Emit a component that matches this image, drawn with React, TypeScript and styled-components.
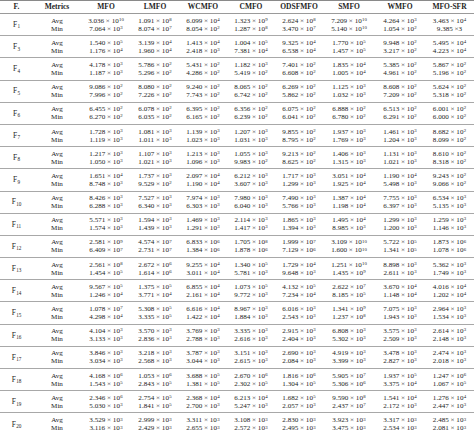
import React from "react";
import styled, { createGlobalStyle } from "styled-components";

const GlobalStyle = createGlobalStyle`
  html, body {
    margin: 0;
    padding: 0;
    background: #ffffff;
  }
  body {
    font-family: "Liberation Serif", "Times New Roman", serif;
    color: #1e1e1e;
  }
`;

const COLS = "33px 48px 50px 48px 48px 48px 48px 52px 50px 49px";

const Page = styled.div`
  width: 474px;
  height: 436px;
  overflow: hidden;
  background: #fff;
`;

const HeaderRow = styled.div`
  display: grid;
  grid-template-columns: ${COLS};
  height: 14px;
  box-sizing: border-box;
  border-top: 1.5px solid #8a8a8a;
  border-bottom: 1px solid #9a9a9a;
  align-items: center;
`;

const HeadCell = styled.div`
  text-align: center;
  font-size: 7.5px;
  font-weight: bold;
  line-height: 1;
  white-space: nowrap;
`;

const Group = styled.div<{ $last?: boolean }>`
  display: grid;
  grid-template-columns: ${COLS};
  height: 22.2px;
  box-sizing: border-box;
  border-bottom: ${(p) => (p.$last ? "none" : "1px solid #a8a8a8")};
  align-items: center;
`;

const FuncCell = styled.div`
  text-align: center;
  font-size: 7.4px;
  line-height: 1;
`;

const Stack = styled.div`
  display: flex;
  flex-direction: column;
  align-items: center;
  font-size: 7.1px;
  line-height: 8px;
  white-space: nowrap;
`;

const Sup = styled.span`
  position: relative;
  top: -0.4em;
  font-size: 0.68em;
  line-height: 0;
  margin-left: 0.3px;
`;

const Sub = styled.span`
  position: relative;
  top: 0.28em;
  font-size: 0.7em;
  line-height: 0;
  margin-left: 0.3px;
`;

const methods = ["MFO", "LMFO", "WCMFO", "CMFO", "ODSFMFO", "SMFO", "WMFO", "MFO-SFR"];

type Block = { f: number; avg: string[]; min: string[] };

const data: Block[] = [
  { f: 1, avg: ["3.036e10", "1.091e8", "6.099e4", "1.323e9", "2.624e8", "7.209e10", "4.264e3", "3.463e4"], min: ["7.064e3", "8.074e7", "8.054e2", "1.287e8", "3.470e7", "5.140e10", "1.054e2", "9.385 ×3"] },
  { f: 3, avg: ["1.540e5", "3.139e4", "1.413e4", "1.004e5", "9.325e4", "1.770e5", "9.948e2", "5.495e4"], min: ["1.176e4", "1.960e4", "2.418e3", "7.381e4", "6.538e4", "1.457e5", "3.217e2", "4.223e4"] },
  { f: 4, avg: ["4.178e3", "5.786e2", "5.431e2", "1.182e3", "7.401e2", "1.835e4", "5.385e2", "5.867e2"], min: ["1.187e3", "5.296e2", "4.286e2", "5.419e2", "6.608e2", "1.005e4", "4.961e2", "5.196e2"] },
  { f: 5, avg: ["9.086e2", "8.080e2", "9.240e2", "8.065e2", "6.269e2", "1.125e3", "8.608e2", "5.624e2"], min: ["7.996e2", "7.226e2", "7.743e2", "6.742e2", "5.862e2", "1.032e3", "7.209e2", "5.318e2"] },
  { f: 6, avg: ["6.455e2", "6.078e2", "6.395e2", "6.356e2", "6.075e2", "6.888e2", "6.513e2", "6.001e2"], min: ["6.270e2", "6.035e2", "6.165e2", "6.239e2", "6.041e2", "6.780e2", "6.291e2", "6.000e2"] },
  { f: 7, avg: ["1.728e3", "1.081e3", "1.139e3", "1.207e3", "9.855e2", "1.937e3", "1.461e3", "8.682e2"], min: ["1.119e3", "1.011e3", "1.023e3", "1.031e3", "8.795e2", "1.769e3", "1.204e3", "8.099e2"] },
  { f: 8, avg: ["1.217e3", "1.107e3", "1.213e3", "1.055e3", "9.213e2", "1.406e3", "1.131e3", "8.610e2"], min: ["1.050e3", "1.021e3", "1.096e3", "9.983e2", "8.625e2", "1.315e3", "1.021e3", "8.318e2"] },
  { f: 9, avg: ["1.651e4", "1.737e3", "2.097e4", "6.212e3", "1.717e3", "3.051e4", "1.190e4", "9.243e2"], min: ["8.748e3", "9.529e2", "1.190e4", "3.607e3", "1.299e3", "1.925e4", "5.498e3", "9.066e2"] },
  { f: 10, avg: ["8.426e3", "7.527e3", "7.974e3", "7.980e3", "7.490e3", "1.387e4", "7.755e3", "6.534e3"], min: ["6.288e3", "6.340e3", "6.303e3", "6.040e3", "5.766e3", "1.198e4", "6.397e3", "5.135e3"] },
  { f: 11, avg: ["5.571e3", "1.594e3", "1.469e3", "2.114e3", "1.865e3", "1.495e4", "1.299e3", "1.259e3"], min: ["1.574e3", "1.439e3", "1.291e3", "1.417e3", "1.394e3", "8.985e3", "1.200e3", "1.146e3"] },
  { f: 12, avg: ["2.581e9", "4.574e7", "6.833e6", "1.705e8", "1.999e7", "3.109e10", "5.722e5", "1.873e6"], min: ["6.409e7", "2.731e7", "1.384e6", "1.878e6", "7.129e6", "1.600e10", "1.341e5", "1.078e6"] },
  { f: 13, avg: ["2.561e8", "2.672e6", "9.255e4", "1.340e5", "1.729e4", "1.251e10", "8.898e3", "5.362e3"], min: ["1.454e5", "1.614e6", "3.011e4", "5.781e3", "9.648e3", "1.435e9", "2.611e3", "1.749e3"] },
  { f: 14, avg: ["9.567e5", "1.375e5", "6.855e4", "1.073e5", "4.132e5", "2.622e7", "3.670e4", "4.016e4"], min: ["1.246e4", "3.771e4", "2.161e4", "9.772e3", "7.234e4", "8.185e5", "1.148e4", "1.202e4"] },
  { f: 15, avg: ["1.078e7", "5.308e5", "6.616e4", "8.967e3", "6.016e3", "1.341e9", "7.075e3", "2.964e3"], min: ["4.298e4", "3.335e5", "1.422e4", "1.884e3", "2.543e3", "1.237e8", "1.943e3", "1.534e3"] },
  { f: 16, avg: ["4.104e3", "3.570e3", "3.769e3", "3.335e3", "2.915e3", "6.808e3", "3.575e3", "2.614e3"], min: ["3.133e3", "2.836e3", "2.788e3", "2.616e3", "2.404e3", "5.302e3", "2.509e3", "2.148e3"] },
  { f: 17, avg: ["3.846e3", "3.218e3", "3.787e3", "3.151e3", "2.690e3", "4.919e3", "3.478e3", "2.474e3"], min: ["3.034e3", "2.568e3", "3.044e3", "2.615e3", "2.084e3", "3.399e3", "2.827e3", "2.018e3"] },
  { f: 18, avg: ["4.168e6", "1.053e6", "3.688e5", "2.670e6", "1.816e6", "5.905e7", "1.937e5", "1.247e6"], min: ["1.543e5", "2.843e5", "1.381e5", "2.302e5", "1.304e5", "5.306e6", "3.375e4", "1.067e5"] },
  { f: 19, avg: ["2.346e6", "2.754e5", "2.368e4", "6.213e4", "1.682e5", "9.590e8", "1.541e4", "1.276e4"], min: ["5.030e3", "1.841e5", "2.700e3", "5.247e3", "2.057e3", "2.437e7", "2.172e3", "2.447e3"] },
  { f: 20, avg: ["3.529e3", "2.999e3", "3.311e3", "3.108e3", "2.830e3", "3.923e3", "3.317e3", "2.485e3"], min: ["3.116e3", "2.429e3", "2.655e3", "2.572e3", "2.495e3", "3.475e3", "2.534e3", "2.081e3"] },
];

// "3.036e10" -> 3.036 × 10^10 ; anything else is shown as typed
function Sci({ v }: { v: string }) {
  const m = v.match(/^([\d.]+)e(\d+)$/);
  if (!m) return <span>{v}</span>;
  return (
    <span>
      {m[1]} × 10<Sup>{m[2]}</Sup>
    </span>
  );
}

export default function App() {
  return (
    <Page>
      <GlobalStyle />
      <HeaderRow>
        <HeadCell>F.</HeadCell>
        <HeadCell>Metrics</HeadCell>
        {methods.map((name) => (
          <HeadCell key={name}>{name}</HeadCell>
        ))}
      </HeaderRow>
      {data.map((b, i) => (
        <Group key={b.f} $last={i === data.length - 1}>
          <FuncCell>
            F<Sub>{b.f}</Sub>
          </FuncCell>
          <Stack>
            <span>Avg</span>
            <span>Min</span>
          </Stack>
          {b.avg.map((a, k) => (
            <Stack key={k}>
              <Sci v={a} />
              <Sci v={b.min[k]} />
            </Stack>
          ))}
        </Group>
      ))}
    </Page>
  );
}
